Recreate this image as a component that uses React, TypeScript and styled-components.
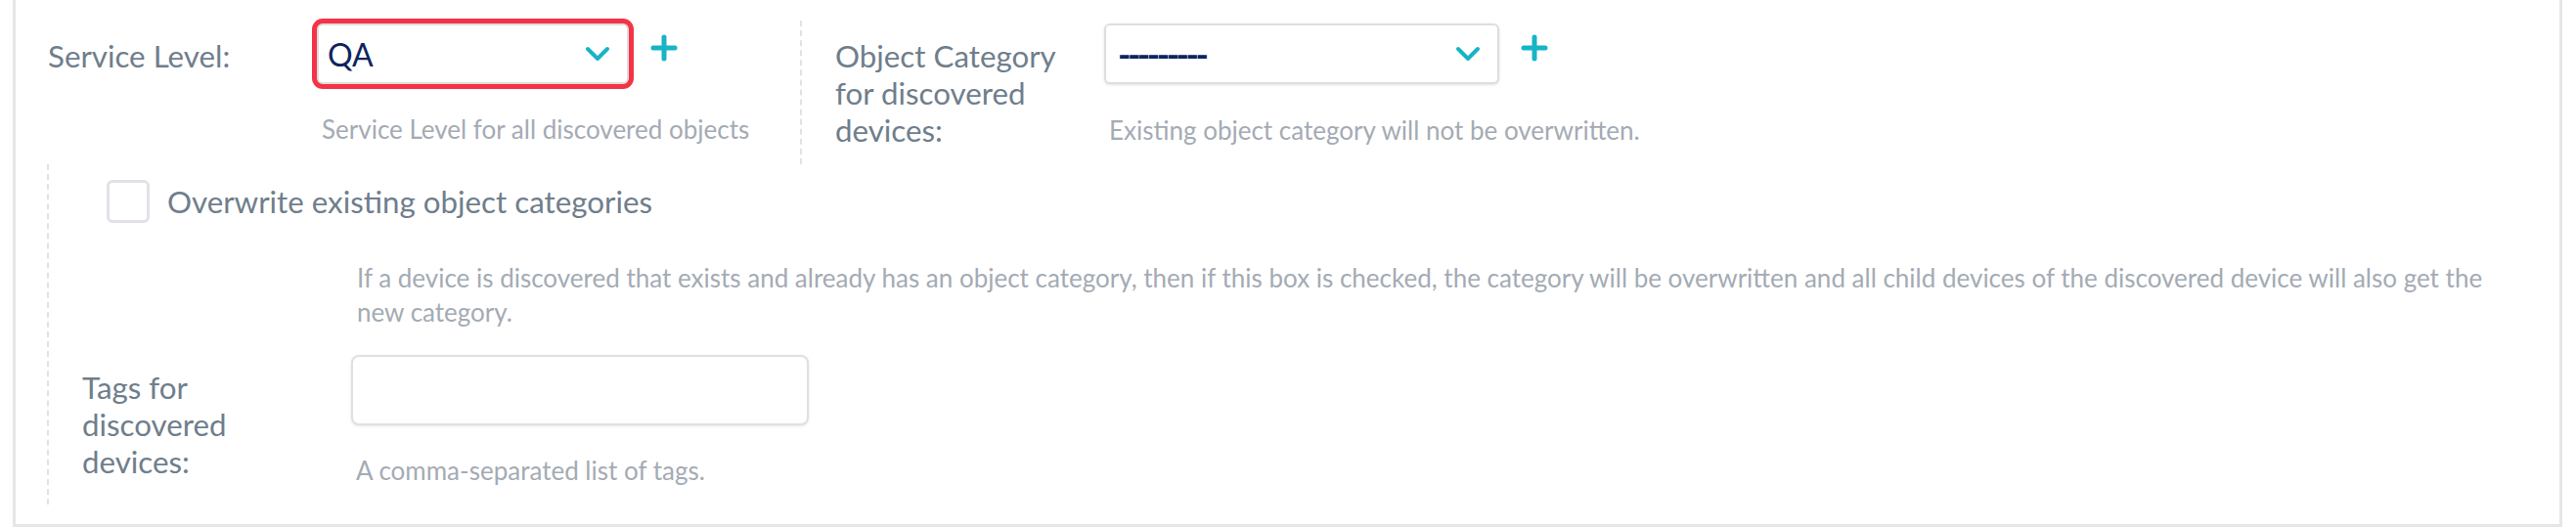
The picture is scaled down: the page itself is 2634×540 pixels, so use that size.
import styled, { createGlobalStyle } from "styled-components";

const GlobalStyle = createGlobalStyle`
  html, body {
    margin: 0;
    padding: 0;
    background: #fff;
  }
  body {
    font-family: Lato, "Liberation Sans", sans-serif;
  }
  * {
    box-sizing: border-box;
  }
`;

const Card = styled.div`
  margin: 0 14px 0 13px;
  padding: 21px 0 20px 32px;
  border: 3px solid #e6e6e6;
  border-top: none;
  background: #fff;
`;

const TopRow = styled.div`
  display: flex;
`;

const Column = styled.div<{ $first?: boolean }>`
  width: ${(p) => (p.$first ? "772px" : "auto")};
  padding: 3px 0 16px ${(p) => (p.$first ? "1px" : "34px")};
  border-right: ${(p) => (p.$first ? "2px dashed #dfe3e7" : "none")};
`;

const Field = styled.div`
  display: grid;
  grid-template-columns: 275px auto;
  grid-template-rows: auto auto;
`;

const Label = styled.div`
  grid-row: 1 / span 2;
  padding: 14px 35px 0 0;
  font-size: 31.3px;
  line-height: 38px;
  color: #6f7e8c;
`;

const ControlRow = styled.div`
  display: flex;
  align-items: flex-start;
  gap: 22px;
`;

const Select = styled.div<{ $width: number; $highlight?: boolean }>`
  width: ${(p) => p.$width}px;
  height: 62px;
  display: flex;
  align-items: center;
  justify-content: space-between;
  padding: 0 17px 0 9px;
  border: 2px solid #dedede;
  border-radius: 6px;
  background: #fff;
  box-shadow: 0 1px 3px rgba(0, 0, 0, 0.12);
  outline: ${(p) => (p.$highlight ? "5px solid #f43446" : "none")};
`;

const Value = styled.span`
  font-size: 32px;
  color: #0e2461;
`;

const Blank = styled.span`
  font-size: 36px;
  font-weight: 700;
  color: #0e2461;
  letter-spacing: -3.5px;
  padding-left: 3px;
`;

const PlusButton = styled.svg`
  margin-top: 11px;
  flex-shrink: 0;
`;

const Hint = styled.div`
  grid-column: 2;
  margin-top: 28px;
  padding-left: 5px;
  font-size: 26px;
  line-height: 36px;
  color: #a4abb4;
`;

const LowerSection = styled.div`
  border-left: 2px dashed #dfe3e7;
  padding: 16px 56px 17px 34px;
`;

const CheckRow = styled.label`
  display: flex;
  align-items: center;
  gap: 18px;
  padding-left: 25px;
  font-size: 31.3px;
  line-height: 38px;
  color: #6f7e8c;
`;

const CheckBox = styled.span`
  width: 44px;
  height: 44px;
  border: 3px solid #dfe3e8;
  border-radius: 6px;
  background: #fff;
  flex-shrink: 0;
`;

const CheckHint = styled.div`
  margin-top: 39px;
  padding-left: 281px;
  font-size: 26px;
  line-height: 35px;
  color: #a4abb4;
`;

const TagsField = styled(Field)`
  margin-top: 26px;
`;

const TextInput = styled.input`
  width: 468px;
  height: 72px;
  border: 2px solid #e0e0e0;
  border-radius: 8px;
  background: #fff;
  box-shadow: 0 1px 3px rgba(0, 0, 0, 0.1);
  outline: none;
`;

const Chevron = () => (
  <svg width="26" height="16" viewBox="0 0 26 16">
    <path
      d="M3 3 L13 13 L23 3"
      fill="none"
      stroke="#17b4c6"
      strokeWidth="4"
      strokeLinecap="round"
      strokeLinejoin="round"
    />
  </svg>
);

const Plus = () => (
  <PlusButton width="28" height="28" viewBox="0 0 28 28">
    <path
      d="M14 3 V25 M3 14 H25"
      fill="none"
      stroke="#17b4c6"
      strokeWidth="5"
      strokeLinecap="round"
    />
  </PlusButton>
);

const App = () => {
  return (
    <>
      <GlobalStyle />
      <Card>
        <TopRow>
          <Column $first>
            <Field>
              <Label>Service Level:</Label>
              <ControlRow>
                <Select $width={319} $highlight>
                  <Value>QA</Value>
                  <Chevron />
                </Select>
                <Plus />
              </ControlRow>
              <Hint>Service Level for all discovered objects</Hint>
            </Field>
          </Column>
          <Column>
            <Field>
              <Label>Object Category for discovered devices:</Label>
              <ControlRow>
                <Select $width={404}>
                  <Blank>---------</Blank>
                  <Chevron />
                </Select>
                <Plus />
              </ControlRow>
              <Hint>Existing object category will not be overwritten.</Hint>
            </Field>
          </Column>
        </TopRow>

        <LowerSection>
          <CheckRow>
            <CheckBox />
            Overwrite existing object categories
          </CheckRow>
          <CheckHint>
            If a device is discovered that exists and already has an object
            category, then if this box is checked, the category will be
            overwritten and all child devices of the discovered device will
            also get the new category.
          </CheckHint>
          <TagsField>
            <Label>Tags for discovered devices:</Label>
            <div>
              <TextInput type="text" />
            </div>
            <Hint>A comma-separated list of tags.</Hint>
          </TagsField>
        </LowerSection>
      </Card>
    </>
  );
};

export default App;
